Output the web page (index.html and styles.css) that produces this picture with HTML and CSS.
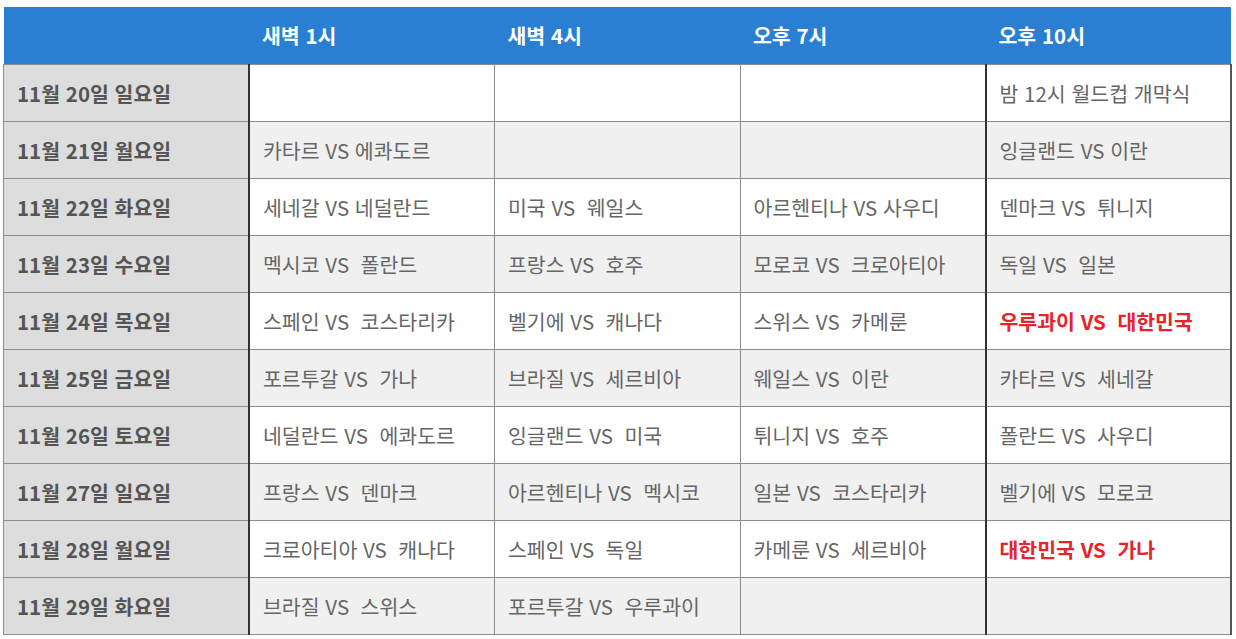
FILE: index.html
```html
<!DOCTYPE html>
<html lang="ko">
<head>
<meta charset="utf-8">
<title>2022 월드컵 일정</title>
<link rel="stylesheet" href="styles.css">
</head>
<body>
<table class="schedule">
  <colgroup>
    <col class="c-date"><col class="c-slot"><col class="c-slot"><col class="c-slot"><col class="c-slot">
  </colgroup>
  <thead>
    <tr><th></th><th>새벽 1시</th><th>새벽 4시</th><th>오후 7시</th><th>오후 10시</th></tr>
  </thead>
  <tbody>
    <tr><th>11월 20일 일요일</th><td></td><td></td><td></td><td>밤 12시 월드컵 개막식</td></tr>
    <tr><th>11월 21일 월요일</th><td>카타르 VS 에콰도르</td><td></td><td></td><td>잉글랜드 VS 이란</td></tr>
    <tr><th>11월 22일 화요일</th><td>세네갈 VS 네덜란드</td><td>미국 VS&nbsp; 웨일스</td><td>아르헨티나 VS 사우디</td><td>덴마크 VS&nbsp; 튀니지</td></tr>
    <tr><th>11월 23일 수요일</th><td>멕시코 VS&nbsp; 폴란드</td><td>프랑스 VS&nbsp; 호주</td><td>모로코 VS&nbsp; 크로아티아</td><td>독일 VS&nbsp; 일본</td></tr>
    <tr><th>11월 24일 목요일</th><td>스페인 VS&nbsp; 코스타리카</td><td>벨기에 VS&nbsp; 캐나다</td><td>스위스 VS&nbsp; 카메룬</td><td class="korea">우루과이 VS&nbsp; 대한민국</td></tr>
    <tr><th>11월 25일 금요일</th><td>포르투갈 VS&nbsp; 가나</td><td>브라질 VS&nbsp; 세르비아</td><td>웨일스 VS&nbsp; 이란</td><td>카타르 VS&nbsp; 세네갈</td></tr>
    <tr><th>11월 26일 토요일</th><td>네덜란드 VS&nbsp; 에콰도르</td><td>잉글랜드 VS&nbsp; 미국</td><td>튀니지 VS&nbsp; 호주</td><td>폴란드 VS&nbsp; 사우디</td></tr>
    <tr><th>11월 27일 일요일</th><td>프랑스 VS&nbsp; 덴마크</td><td>아르헨티나 VS&nbsp; 멕시코</td><td>일본 VS&nbsp; 코스타리카</td><td>벨기에 VS&nbsp; 모로코</td></tr>
    <tr><th>11월 28일 월요일</th><td>크로아티아 VS&nbsp; 캐나다</td><td>스페인 VS&nbsp; 독일</td><td>카메룬 VS&nbsp; 세르비아</td><td class="korea">대한민국 VS&nbsp; 가나</td></tr>
    <tr><th>11월 29일 화요일</th><td>브라질 VS&nbsp; 스위스</td><td>포르투갈 VS&nbsp; 우루과이</td><td></td><td></td></tr>
  </tbody>
</table>
</body>
</html>
```
FILE: styles.css
```css
html, body {
  margin: 0;
  padding: 0;
  background: #ffffff;
}
body {
  padding: 7px 0 0 3px;
  font-family: "Noto Sans CJK KR", "Noto Sans", sans-serif;
}
.schedule {
  width: 1229px;
  border-collapse: collapse;
  table-layout: fixed;
  font-size: 20.5px;
}
.c-date, .c-slot { width: 20%; }
.schedule thead th {
  background: #2a7fd3;
  color: #ffffff;
  font-weight: 700;
  text-align: left;
  height: 57px;
  padding: 0 13px;
  border: none;
  box-sizing: border-box;
}
.schedule tbody th,
.schedule tbody td {
  height: 57px;
  padding: 0 13px;
  border: 1px solid #8c8c8c;
  text-align: left;
  vertical-align: middle;
  box-sizing: border-box;
  white-space: nowrap;
}
.schedule tbody th {
  background: #dddddd;
  color: #555555;
  font-weight: 700;
  border-right: 2px solid #333333;
}
.schedule tbody td {
  color: #666666;
  font-weight: 400;
}
.schedule tbody tr:nth-child(even) td { background: #f0f0f0; }
.schedule tbody tr:nth-child(odd) td { background: #ffffff; }
.schedule tbody td:nth-child(4) { border-right: 2px solid #333333; }
.schedule tbody td:nth-child(5) { border-right: 2px solid #555555; }
.schedule tbody td.korea {
  color: #e8232a;
  font-weight: 700;
}
```
